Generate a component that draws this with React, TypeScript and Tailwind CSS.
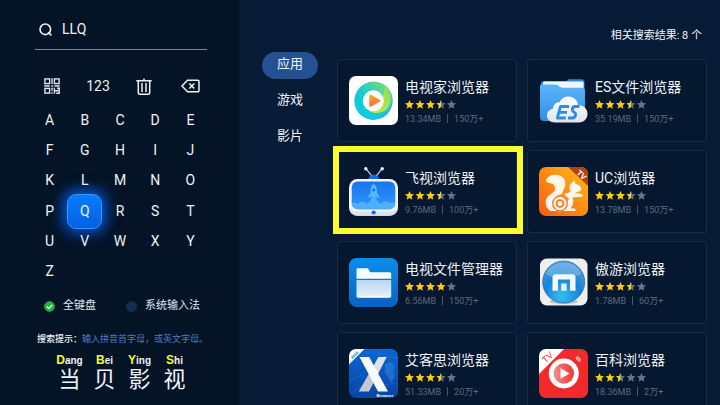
import React, { useState } from "react";

const LETTERS = "ABCDEFGHIJKLMNOPQRSTUVWXYZ".split("");
const TABS = ["应用", "游戏", "影片"];
const PINYIN = [
  { initial: "D", rest: "ang", char: "当" },
  { initial: "B", rest: "ei", char: "贝" },
  { initial: "Y", rest: "ing", char: "影" },
  { initial: "S", rest: "hi", char: "视" },
];

function DianshijiaIcon() {
  return (
    <svg viewBox="0 0 49 49" className="size-[49px] shrink-0" aria-hidden="true">
      <defs>
        <linearGradient id="dsj-ring" x1="0" y1="1" x2="1" y2="0">
          <stop offset="0" stopColor="#05cbe8" />
          <stop offset="0.45" stopColor="#17cbd2" />
          <stop offset="1" stopColor="#8fe05a" />
        </linearGradient>
        <linearGradient id="dsj-green" x1="0" y1="1" x2="1" y2="0">
          <stop offset="0" stopColor="#c5ea3c" />
          <stop offset="1" stopColor="#8be05c" />
        </linearGradient>
        <linearGradient id="dsj-play" x1="0" y1="0" x2="0" y2="1">
          <stop offset="0" stopColor="#ffb020" />
          <stop offset="1" stopColor="#fb6548" />
        </linearGradient>
      </defs>
      <rect width="49" height="49" rx="7" fill="#fff" />
      <circle cx="24.7" cy="24.8" r="19" fill="#2aa7f2" />
      <path d="M24.500 43.800a19 19 0 1 1 17.600-26c2.600 9-1.600 17-8.400 21.400-3 2.300-5.700 4.200-9.200 4.600z" fill="url(#dsj-ring)" />
      <path d="M36 11c5 5 6.500 11 4.600 17.200-2.500 6.500-8.600 9.300-15.600 8.800l-4-1.600L33 24z" fill="url(#dsj-green)" />
      <circle cx="24.3" cy="24.8" r="10.5" fill="#fff" />
      <path d="M20.300 19.600c0-1 1-1.300 1.700-.9l9 5.200c.8.500.8 1.200 0 1.700l-9 5.100c-.8.400-1.700 0-1.700-.9z" fill="url(#dsj-play)" />
    </svg>
  );
}

function EsIcon() {
  return (
    <svg viewBox="0 0 49 49" className="size-[49px] shrink-0" aria-hidden="true">
      <defs>
        <linearGradient id="es-front" x1="0" y1="0" x2="0" y2="1">
          <stop offset="0" stopColor="#5cb5f7" />
          <stop offset="1" stopColor="#2e8fe8" />
        </linearGradient>
        <linearGradient id="es-cloud" x1="0" y1="0" x2="0" y2="1">
          <stop offset="0" stopColor="#ffffff" />
          <stop offset="1" stopColor="#dfe4ea" />
        </linearGradient>
      </defs>
      <path d="M1.500 9c0-2.500 1.500-4 4-4h22l2-1.700h13c2 0 3 1 3 3V20h-44z" fill="#2b86e0" />
      <path d="M4 7c0-1 .7-1.500 1.700-1.500H43c1 0 1.600.6 1.600 1.600V18H4z" fill="#f1f5f9" />
      <path d="M1 11c0-1.600 1-2.500 2.400-2.500h12.800c3.400 0 4 3.200 7.800 3.200h19c2 0 3 1 3 3V41c0 2.500-1.500 4-4 4H5c-2.500 0-4-1.500-4-4z" fill="url(#es-front)" />
      <path d="M16 46.500c-5 0-8-3-8-7 0-3.600 2.500-6.300 6-6.800.2-4 3-6.700 6.500-6.500 1.800-3.800 5-5.700 8.800-5.700 5.400 0 9.300 3.600 9.800 8.500 5.400.2 9.400 3.800 9.400 8.800 0 5-3.600 8.700-8.500 8.700z" fill="url(#es-cloud)" />
      <g fill="none" stroke="#2d8ce8" strokeWidth="2.8" strokeLinejoin="round">
        <path d="M30 30.500h-8.500l-3.200 11.500h8.500M20 36.300h8" />
        <path d="M40.500 30.500h-4c-2.300 0-3.200 1.500-3.200 3 0 3.500 3.700 2 3.400 5-.2 2-1.600 3.500-3.700 3.500h-4" />
      </g>
    </svg>
  );
}

function FeishiIcon() {
  return (
    <svg viewBox="0 0 49 49" className="size-[49px] shrink-0" aria-hidden="true">
      <defs>
        <linearGradient id="fs-screen" x1="0" y1="0" x2="0" y2="1">
          <stop offset="0" stopColor="#1a73ee" />
          <stop offset="1" stopColor="#2e9aff" />
        </linearGradient>
        <clipPath id="fs-clip">
          <rect x="2.7" y="14.5" width="43.6" height="27.8" rx="6" />
        </clipPath>
      </defs>
      <path d="M17 1.700l6 7.600M33 1.700l-6 7.600" stroke="#c9d2de" strokeWidth="1.2" />
      <circle cx="16.8" cy="1.8" r="1.7" fill="#f2f5f9" />
      <circle cx="33.2" cy="1.8" r="1.7" fill="#f2f5f9" />
      <path d="M19 13c.3-3 2.500-5.300 5.700-5.300S30.100 10 30.400 13z" fill="#1469e6" />
      <rect y="12" width="49" height="36.7" rx="8.5" fill="#f3f5f8" />
      <path d="M.2 41c.7 5 3.800 7.700 8.300 7.700h32c4.500 0 7.600-2.700 8.300-7.700-1.500 2.300-3.800 3.500-7 3.500H7.200c-3.200 0-5.500-1.200-7-3.500z" fill="#dde2e9" />
      <g clipPath="url(#fs-clip)">
        <rect x="2" y="14" width="45" height="29" fill="url(#fs-screen)" />
        <path d="M2 43v-6c2.500-2.400 5.500-1.500 6.500.2 1.500-2.700 6-3.700 8.500-.6 3.500-.3 5.300-3 6-9h3.500c.6 6 2.500 8.700 6 9 2.300-3.500 6.500-3 8.300-.2 1.700-1.700 4.200-1.400 6.200.2V43z" fill="#4fb0ff" />
        <path d="M24.700 16.500c2.500 2 3.500 5 3.100 9.600l2 2.500v2.600l-3-1.700h-4.200l-3 1.700v-2.600l2-2.500c-.4-4.600.6-7.600 3.100-9.600z" fill="#5cb4ff" />
        <circle cx="24.7" cy="23" r="1.5" fill="#1a6fe8" />
      </g>
      <circle cx="24.7" cy="45.5" r="2.1" fill="#1768e8" />
    </svg>
  );
}

function UcIcon() {
  return (
    <svg viewBox="0 0 49 49" className="size-[49px] shrink-0" aria-hidden="true">
      <defs>
        <linearGradient id="uc-bg" x1="0" y1="1" x2="1" y2="0">
          <stop offset="0" stopColor="#fb5b12" />
          <stop offset="0.5" stopColor="#fd8a12" />
          <stop offset="1" stopColor="#ffc01e" />
        </linearGradient>
        <clipPath id="uc-clip">
          <rect width="49" height="49" rx="7" />
        </clipPath>
      </defs>
      <g clipPath="url(#uc-clip)">
        <rect width="49" height="49" fill="url(#uc-bg)" />
        <path d="M29 0h20v19z" fill="#b5400f" />
        <text transform="translate(37 6.500) rotate(43)" fill="#fff" fontSize="8" fontWeight="700" fontFamily="Liberation Sans, sans-serif">TV</text>
        <g fill="#fff6ea">
          <path d="M7 13C8.500 9.500 13 7.300 18.500 8c5.500.8 8.300 4.600 7.800 9.500-.4 3.700-2.300 6-3.300 9.500-4 .8-7.500 3-8.500 7-.8 3.500 0 7 3.500 9.500l-6.500.5C7.500 41.500 6 37.500 7 33c1.200-5.500 7.500-6 8.800-9.800 1.200-3.600-1.300-6.800-4.300-6.900C9.500 16.200 7 15.500 7 13z" />
          <path d="M32 16.500l3.200-3 1.300 3.200c3.200.5 5.500 2.700 5.800 5.300 0 1.500-1.200 2.500-3 2.700l-3.300.8 7 1.800c1.300.7 1 2.200-.3 2.500l-9.200.7c1.500 4 .8 8-2 11h4.500l.8 2.500H12l-1-1.700 14-1.300 5-9-5-5c2-.8 4.500-1 6.500-2.300-1.500-2.200-1.500-5.700.5-8.200z" />
          <circle cx="21" cy="36.500" r="8" />
        </g>
        <g fill="none" stroke="#fb7214">
          <circle cx="21" cy="36.500" r="7.300" strokeWidth="1.300" />
          <circle cx="21" cy="36.500" r="3.400" strokeWidth="1.700" />
        </g>
      </g>
    </svg>
  );
}

function FolderIcon() {
  return (
    <svg viewBox="0 0 49 49" className="size-[49px] shrink-0" aria-hidden="true">
      <defs>
        <linearGradient id="fm-bg" x1="0" y1="0" x2="0" y2="1">
          <stop offset="0" stopColor="#0a8fea" />
          <stop offset="1" stopColor="#0962c2" />
        </linearGradient>
        <linearGradient id="fm-front" x1="0" y1="0" x2="0" y2="1">
          <stop offset="0" stopColor="#b9d6f2" />
          <stop offset="1" stopColor="#e8f2fb" />
        </linearGradient>
      </defs>
      <rect width="49" height="49" rx="7.5" fill="url(#fm-bg)" />
      <path d="M7.500 20.800v-9c0-1 .6-1.600 1.600-1.600h9.400c1.500 0 1.700 4 3.500 4h18.500c1 0 1.700.7 1.700 1.700v4.900z" fill="#f8fbfe" />
      <path d="M7.500 22h34.700v16c0 1-.7 1.700-1.700 1.700H9.200c-1 0-1.700-.7-1.700-1.700z" fill="url(#fm-front)" />
      <path d="M8 38.800h33.700" stroke="#fff" strokeWidth="1" />
    </svg>
  );
}

function MaxthonIcon() {
  return (
    <svg viewBox="0 0 49 49" className="size-[49px] shrink-0" aria-hidden="true">
      <defs>
        <radialGradient id="mx-ball" cx="0.45" cy="0.85" r="0.9">
          <stop offset="0" stopColor="#35bdf0" />
          <stop offset="0.5" stopColor="#1684d4" />
          <stop offset="1" stopColor="#5a9fdc" />
        </radialGradient>
      </defs>
      <rect x="1" y="0.5" width="47.5" height="47" rx="7" fill="#efeff0" />
      <ellipse cx="24.7" cy="43.5" rx="14" ry="2.5" fill="#b9bdc4" />
      <circle cx="24.7" cy="24" r="21" fill="url(#mx-ball)" stroke="#2b70b4" strokeWidth="0.8" />
      <path d="M7 16C10 8 17 4.500 24.700 4.500S39 8 42.400 16C36 20 30 15 24 17S12 20 7 16z" fill="#a9d3f5" opacity="0.400" />
      <path d="M13.500 32.800V19.300c0-2 1-3 3-3h17c2 0 3 1 3 3v13.500h-5.500V21.500H19v11.300z" fill="#f4f9fd" />
      <path d="M22.200 25.500h5.400v7.300h-5.400z" fill="#e4f1fb" />
    </svg>
  );
}

function XBrowserIcon() {
  return (
    <svg viewBox="0 0 49 49" className="size-[49px] shrink-0" aria-hidden="true">
      <defs>
        <linearGradient id="xb-bg" x1="0" y1="0" x2="0" y2="1">
          <stop offset="0" stopColor="#0c66d4" />
          <stop offset="1" stopColor="#0745a4" />
        </linearGradient>
        <clipPath id="xb-clip">
          <rect width="49" height="49" rx="7" />
        </clipPath>
      </defs>
      <g clipPath="url(#xb-clip)">
        <rect width="49" height="49" fill="url(#xb-bg)" />
        <path d="M36 15l6-2 4 4-2 5 2 5-4 7-3-6-3-4z" fill="#3c8be6" opacity="0.450" />
        <path d="M0 32l12-6 14 12 20-4M28 3l8 5 13 1M4 44l8-8" stroke="#4c9bf0" strokeWidth="0.500" fill="none" opacity="0.500" />
        <path d="M0 0h15.500L0 15.500z" fill="#f4f9ff" />
        <path d="M3 9l6-6" stroke="#4a97ea" strokeWidth="2.500" strokeDasharray="1.500 0.700" />
        <path d="M29.500 8h8L20 42.500H9.700z" fill="#c3c8cf" />
        <path d="M29.500 8h8l-10.300 20.300-4.700-6.500z" fill="#dfe2e6" />
        <path d="M10.500 8h9.700l18.800 34.500H29z" fill="#fafbfc" />
        <text x="27.500" y="47.500" fill="#fff" fontSize="4.200" fontWeight="700" fontFamily="Liberation Sans, sans-serif">Browser</text>
      </g>
    </svg>
  );
}

function BaikeIcon() {
  return (
    <svg viewBox="0 0 49 49" className="size-[49px] shrink-0" aria-hidden="true">
      <defs>
        <clipPath id="bk-clip">
          <rect width="49" height="49" rx="7" />
        </clipPath>
        <linearGradient id="bk-disc" x1="0" y1="0" x2="1" y2="0">
          <stop offset="0" stopColor="#ee8f8f" />
          <stop offset="1" stopColor="#f03434" />
        </linearGradient>
      </defs>
      <g clipPath="url(#bk-clip)">
        <rect width="49" height="49" fill="#f12a2c" />
        <path d="M0 0h25L0 25z" fill="#fff" />
        <text transform="translate(6.500 14.500) rotate(-43)" fill="#f04040" fontSize="9" fontFamily="Liberation Sans, sans-serif">TV</text>
        <circle cx="24.8" cy="24.5" r="15" fill="#fff" />
        <circle cx="24.8" cy="24.5" r="10.2" fill="url(#bk-disc)" />
        <path d="M21.500 19.200l9 5.300-9 5.300z" fill="#fff" />
        <ellipse cx="39.3" cy="10" rx="3.2" ry="1.8" transform="rotate(45 39.300 10)" fill="#fbb5b5" />
        <path d="M37.800 8.300l3.200 3.500" stroke="#f12a2c" strokeWidth="0.600" />
      </g>
    </svg>
  );
}

type AppItem = {
  name: string;
  size: string;
  installs: string;
  rating: number;
  Icon: () => React.JSX.Element;
  focused?: boolean;
};

const APPS: AppItem[] = [
  { name: "电视家浏览器", size: "13.34MB", installs: "150万+", rating: 3.5, Icon: DianshijiaIcon },
  { name: "ES文件浏览器", size: "35.19MB", installs: "150万+", rating: 3.5, Icon: EsIcon },
  { name: "飞视浏览器", size: "9.76MB", installs: "100万+", rating: 3.5, Icon: FeishiIcon, focused: true },
  { name: "UC浏览器", size: "13.78MB", installs: "150万+", rating: 3.5, Icon: UcIcon },
  { name: "电视文件管理器", size: "6.56MB", installs: "150万+", rating: 4, Icon: FolderIcon },
  { name: "傲游浏览器", size: "1.78MB", installs: "60万+", rating: 3.5, Icon: MaxthonIcon },
  { name: "艾客思浏览器", size: "51.33MB", installs: "20万+", rating: 3.5, Icon: XBrowserIcon },
  { name: "百科浏览器", size: "18.36MB", installs: "2万+", rating: 2.5, Icon: BaikeIcon },
];

const STAR = "M4.500 0l1.300 3 3.200.3-2.400 2.200.7 3.200-2.800-1.700-2.800 1.700.7-3.200L0 3.300 3.200 3z";
const HALF_STAR = "M4.500 0v7L1.700 8.700l.7-3.200L0 3.300 3.200 3z";

function Rating({ value }: { value: number }) {
  return (
    <svg viewBox="0 0 51 9" className="h-[9px] w-[51px]" role="img" aria-label={`${value} / 5`}>
      {[0, 1, 2, 3, 4].map((i) => (
        <g key={i} transform={`translate(${i * 10.5} 0)`}>
          <path d={STAR} fill={value >= i + 1 ? "#ffcc14" : "#66758a"} />
          {value === i + 0.5 && <path d={HALF_STAR} fill="#ffcc14" />}
        </g>
      ))}
    </svg>
  );
}

function AppCard({ app }: { app: AppItem }) {
  const { Icon } = app;
  return (
    <li className="relative">
      <a
        href="#"
        className="flex h-[83px] items-center gap-[7px] rounded-[3px] border border-[#172b43] bg-[#06182f] pl-[11px]"
      >
        <Icon />
        <div className="flex min-w-0 flex-col">
          <span className="truncate text-[14px] leading-5 text-[#eef2f7]">{app.name}</span>
          <span className="mt-[3px]">
            <Rating value={app.rating} />
          </span>
          <span className="mt-1 flex items-center gap-[6px] text-[9px] leading-3 text-[#5c6a7e]">
            <span>{app.size}</span>
            <span className="h-[9px] w-px bg-[#46556a]" />
            <span>{app.installs}</span>
          </span>
        </div>
      </a>
      {app.focused && (
        <span className="pointer-events-none absolute -top-1 -right-[6px] -bottom-px -left-1 border-[6px] border-[#fbfb30]" />
      )}
    </li>
  );
}

function SearchIcon() {
  return (
    <svg viewBox="0 0 14 14" className="size-[13px]" fill="none" stroke="#eef2f7" strokeWidth="1.700" aria-hidden="true">
      <circle cx="6.8" cy="6.8" r="5.7" />
      <path d="M10.200 10.200l2.600 2.600" strokeLinecap="round" />
    </svg>
  );
}

function QrIcon() {
  return (
    <svg viewBox="0 0 16 16" className="size-4" fill="none" stroke="#dfe5ec" strokeWidth="1.400" aria-hidden="true">
      <rect x="0.9" y="0.9" width="4.7" height="4.7" />
      <rect x="10.4" y="0.9" width="4.7" height="4.7" />
      <rect x="0.9" y="10.4" width="4.7" height="4.7" />
      <path d="M8 .3v5.800M.3 8h5.500M7.300 8h2M10.500 8h5.200M8 9.800v3M8 14.300v1.500M10.400 9.700v6M10.400 12.700h4.700M13 10.300h2.200v5h-3" />
    </svg>
  );
}

function TrashIcon() {
  return (
    <svg viewBox="0 0 16 17" className="h-[17px] w-4" fill="none" stroke="#eef2f7" strokeWidth="1.500" aria-hidden="true">
      <path d="M.3 2.700h15.400M8 .5v2M2.300 2.700v12c0 1 .5 1.500 1.500 1.500h8.400c1 0 1.500-.5 1.500-1.500v-12M6 5v9M10 5v9" />
    </svg>
  );
}

function BackspaceIcon() {
  return (
    <svg viewBox="0 0 19 14" className="h-[14px] w-[19px]" fill="none" stroke="#eef2f7" strokeWidth="1.500" aria-hidden="true">
      <path d="M6.500 1.200h10.300c.8 0 1.200.4 1.200 1.200v9.200c0 .8-.4 1.200-1.200 1.200H6.500L1 7z" strokeLinejoin="round" />
      <path d="M8.300 4.500l5 5M13.300 4.500l-5 5" strokeWidth="1.600" />
    </svg>
  );
}

function InputMode({ label, checked, onSelect }: { label: string; checked: boolean; onSelect: () => void }) {
  return (
    <label className="flex items-center gap-2 text-[11px] leading-4 text-[#dfe5ee]">
      <span className="relative flex">
        <input
          type="radio"
          name="input-mode"
          checked={checked}
          onChange={onSelect}
          className="size-[11px] appearance-none rounded-full bg-[#132c50] checked:border checked:border-[#4d7066] checked:bg-[#10c12c]"
        />
        {checked && (
          <svg viewBox="0 0 11 11" className="pointer-events-none absolute inset-0 size-[11px]" aria-hidden="true">
            <path d="M2.900 5.500l2 2 3.500-3.700" fill="none" stroke="#fff" strokeWidth="1.200" />
          </svg>
        )}
      </span>
      {label}
    </label>
  );
}

export default function App() {
  const [query, setQuery] = useState("LLQ");
  const [mode, setMode] = useState("full");

  return (
    <div className="flex h-screen overflow-hidden bg-[#071b36] font-['Roboto','Noto_Sans_CJK_SC',sans-serif] text-[#eef2f7]">
      <aside className="w-[239px] shrink-0 bg-[#041326] pt-[18px] pr-[26px] pl-[29px]">
        <label className="mx-[6px] flex h-8 items-start gap-[10px] border-b border-[#7d8794] pl-1">
          <span className="flex h-[22px] items-center">
            <SearchIcon />
          </span>
          <input
            type="text"
            aria-label="搜索"
            value={query}
            onChange={(e) => setQuery(e.target.value)}
            className="h-[22px] w-full min-w-0 bg-transparent text-[14px] outline-none"
          />
        </label>

        <div className="mt-6 grid h-6 grid-cols-4 text-[14px]">
          <button type="button" aria-label="二维码" className="flex items-center justify-center">
            <QrIcon />
          </button>
          <button type="button" className="flex items-center justify-center">
            123
          </button>
          <button type="button" aria-label="清空" onClick={() => setQuery("")} className="flex items-center justify-center">
            <TrashIcon />
          </button>
          <button
            type="button"
            aria-label="退格"
            onClick={() => setQuery(query.slice(0, -1))}
            className="flex items-center justify-center"
          >
            <BackspaceIcon />
          </button>
        </div>

        <div className="mt-[7px] mr-[5px] ml-[3px] grid h-[182px] grid-cols-5 grid-rows-6 text-[14px]">
          {LETTERS.map((letter) => (
            <button
              key={letter}
              type="button"
              onClick={() => setQuery(query + letter)}
              className="flex items-center justify-center"
            >
              {letter === "Q" ? (
                <span className="-my-1 flex size-[35px] shrink-0 items-center justify-center rounded-[9px] border border-[#2f9bff] bg-linear-to-b from-[#0a7cfb] to-[#0560e4] shadow-[0_0_14px_4px_#0558dc]">
                  {letter}
                </span>
              ) : (
                <span className="relative">{letter}</span>
              )}
            </button>
          ))}
        </div>

        <div className="mt-[11px] flex gap-[30px] pl-[15px]">
          <InputMode label="全键盘" checked={mode === "full"} onSelect={() => setMode("full")} />
          <InputMode label="系统输入法" checked={mode === "system"} onSelect={() => setMode("system")} />
        </div>

        <p className="mt-[18px] pl-2 text-[9px] leading-[14px] whitespace-nowrap">
          <span className="font-medium">搜索提示：</span>
          <span className="text-[#4f7cc4]">输入拼音首字母，或英文字母。</span>
        </p>

        <div className="mt-[7px] mr-[21px] ml-[23px] grid grid-cols-4">
          {PINYIN.map((item) => (
            <div key={item.char} className="flex flex-col items-center">
              <span className="font-['Liberation_Sans',sans-serif] text-[10px] leading-[14px] font-bold">
                <span className="text-[12px] text-[#fbfb10]">{item.initial}</span>
                {item.rest}
              </span>
              <span className="text-[22px] leading-6">{item.char}</span>
            </div>
          ))}
        </div>
      </aside>

      <main className="flex min-w-0 flex-1 flex-col pr-[13px] pl-[23px]">
        <p className="mt-7 pr-[5px] text-right text-[11px] leading-4">相关搜索结果: 8 个</p>
        <div className="mt-2 flex gap-[19px]">
          <nav className="flex w-14 shrink-0 flex-col gap-[9px]">
            {TABS.map((tab, i) => (
              <button
                key={tab}
                type="button"
                className={
                  i === 0
                    ? "h-[27px] rounded-full bg-[#245191] pb-1 text-[13px]"
                    : "h-[27px] rounded-full pb-1 text-[13px]"
                }
              >
                {tab}
              </button>
            ))}
          </nav>
          <ul className="mt-[7px] grid min-w-0 flex-1 grid-cols-2 gap-x-[10px] gap-y-2">
            {APPS.map((app) => (
              <AppCard key={app.name} app={app} />
            ))}
          </ul>
        </div>
      </main>
    </div>
  );
}
